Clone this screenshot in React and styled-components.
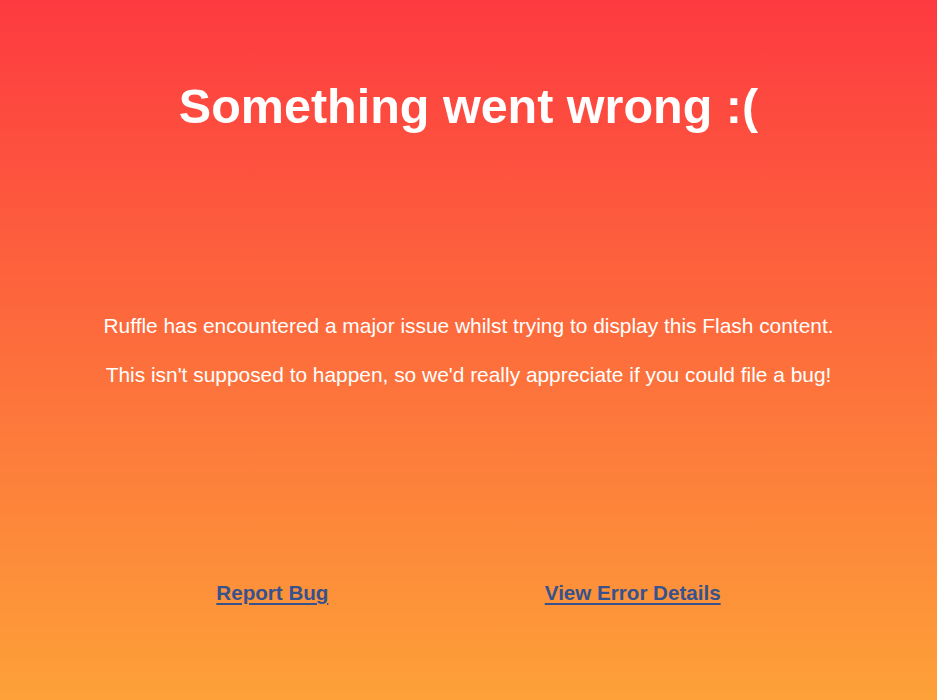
import React from 'react';
import styled, { createGlobalStyle } from 'styled-components';

const Global = createGlobalStyle`
  html, body {
    margin: 0;
    padding: 0;
  }
  body {
    font-family: "Liberation Sans", Arial, sans-serif;
  }
`;

const Panic = styled.div`
  width: 937px;
  height: 700px;
  box-sizing: border-box;
  font-size: 20px;
  text-align: center;
  color: #fff;
  background: linear-gradient(180deg, #fd3a40 0%, #fda138 100%);
  display: flex;
  flex-flow: column;
  justify-content: space-around;
`;

const Title = styled.div`
  font-size: 48.5px;
  font-weight: bold;
`;

const Body = styled.div`
  font-size: 20.9px;

  p {
    margin: 25px 0;
  }
`;

const Links = styled.ul`
  padding: 0;
  margin: 13px 0 17px;
  display: flex;
  list-style-type: none;
  justify-content: space-evenly;
  font-size: 20.6px;
`;

const Link = styled.a`
  color: #37528c;
  font-weight: bold;
  text-decoration: underline;
  text-decoration-thickness: 2px;
  text-underline-offset: 3px;
  cursor: pointer;
`;

export default function App() {
  return (
    <>
      <Global />
      <Panic>
        <Title>Something went wrong :(</Title>
        <Body>
          <p>Ruffle has encountered a major issue whilst trying to display this Flash content.</p>
          <p>This isn't supposed to happen, so we'd really appreciate if you could file a bug!</p>
        </Body>
        <div>
          <Links>
            <li><Link href="#">Report Bug</Link></li>
            <li><Link href="#">View Error Details</Link></li>
          </Links>
        </div>
      </Panic>
    </>
  );
}
